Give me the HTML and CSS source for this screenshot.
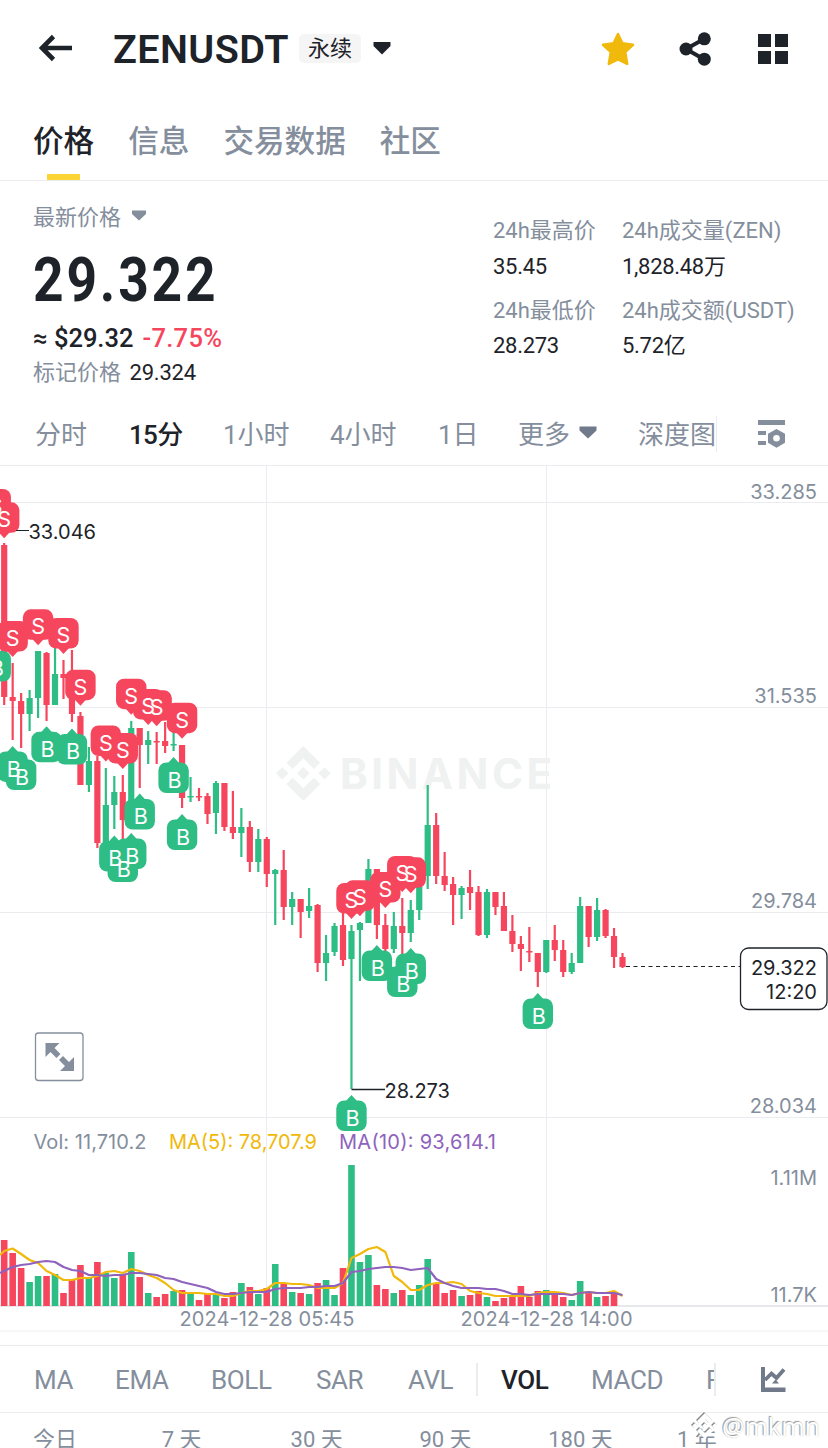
FILE: index.html
```html
<!DOCTYPE html>
<html lang="zh-CN">
<head>
  <meta charset="UTF-8">
  <meta name="viewport" content="width=device-width, initial-scale=1.0">
  <title>ZENUSDT 永续</title>
  <link rel="stylesheet" href="styles.css">
</head>
<body>
  <header class="header">
    <svg class="back" width="34" height="28" viewBox="0 0 34 28">
      <path d="M33 14H4M14.500 2.500L3 14l11.500 11.500" fill="none" stroke="#1e2329" stroke-width="4.600"/>
    </svg>
    <h1 class="symbol">ZENUSDT</h1>
    <span class="badge">永续</span>
    <svg class="caret" width="18" height="14" viewBox="0 0 18 14"><path d="M0.500 1h17v4L9 13.500.500 5z" fill="#1e2329"/></svg>
    <div class="actions">
      <svg width="34" height="34" viewBox="0 0 34 34">
        <path d="M17 2l4.400 9.300 10.600 1.500-7.800 7.200 2 12L17 27.500 7.800 32l2-12L2 12.800l10.600-1.500z" fill="#f0b90b" stroke="#f0b90b" stroke-width="2.500" stroke-linejoin="round"/>
      </svg>
      <svg width="32" height="34" viewBox="0 0 32 34">
        <path d="M25 7L7 17l18 10.200" fill="none" stroke="#1e2329" stroke-width="4"/>
        <circle cx="25.300" cy="6.800" r="6.500" fill="#1e2329"/>
        <circle cx="7" cy="17" r="6.500" fill="#1e2329"/>
        <circle cx="25.300" cy="27.200" r="6.500" fill="#1e2329"/>
      </svg>
      <svg width="30" height="30" viewBox="0 0 30 30" fill="#1e2329">
        <path d="M0 0h13v13H0zM17 0h13v13H17zM0 17h13v13H0zM17 17h13v13H17z"/>
      </svg>
    </div>
  </header>

  <nav class="tabs">
    <span class="tab active">价格</span>
    <span class="tab">信息</span>
    <span class="tab">交易数据</span>
    <span class="tab">社区</span>
  </nav>

  <section class="summary">
    <div class="price">
      <div class="price-label">最新价格
        <svg width="14" height="11" viewBox="0 0 14 11"><path d="M0 .500h14v3.500l-7 6.500-7-6.500z" fill="#848e9c"/></svg>
      </div>
      <div class="last">29.322</div>
      <div class="change"><span>≈ $29.32</span><span class="down">-7.75%</span></div>
      <div class="mark">标记价格 <b>29.324</b></div>
    </div>
    <dl class="stats">
      <div><dt>24h最高价</dt><dd>35.45</dd></div>
      <div><dt>24h成交量(ZEN)</dt><dd>1,828.48万</dd></div>
      <div><dt>24h最低价</dt><dd>28.273</dd></div>
      <div><dt>24h成交额(USDT)</dt><dd>5.72亿</dd></div>
    </dl>
  </section>

  <nav class="intervals">
    <span>分时</span>
    <span class="active">15分</span>
    <span>1小时</span>
    <span>4小时</span>
    <span>1日</span>
    <span>更多 <svg width="18" height="13" viewBox="0 0 18 13"><path d="M.500.500h17v4L9 12.500.500 4.500z" fill="#707a8a"/></svg></span>
    <span class="depth">深度图</span>
    <svg width="30" height="30" viewBox="0 0 30 30">
      <path d="M1 1h27v5H1zM1 12h8v4H1zM1 22h8v4H1z" fill="#848e9c"/>
      <path d="M19.500 10l8.500 4.800v9l-8.500 4.900-8.500-4.900v-9z" fill="#848e9c"/>
      <circle cx="19.500" cy="19.300" r="3.300" fill="#fff"/>
    </svg>
  </nav>

  <svg class="chart" id="chart" width="828" height="867" viewBox="0 465 828 867"></svg>

  <nav class="indicators">
    <span>MA</span>
    <span>EMA</span>
    <span>BOLL</span>
    <span>SAR</span>
    <span>AVL</span>
    <span class="active">VOL</span>
    <span>MACD</span>
    <span class="cut">RSI</span>
    <svg width="25" height="25" viewBox="0 0 25 25">
      <path d="M0 0h4v20.500h20.500V25H0z" fill="#707a8a"/>
      <path d="M4 13l6.500-6.500 5 4.500L23 2.500" fill="none" stroke="#707a8a" stroke-width="3.800"/>
      <path d="M14.500 12.500l3.500 4h-7z" fill="#707a8a"/>
    </svg>
  </nav>

  <div class="periods">
    <span>今日</span>
    <span>7 天</span>
    <span>30 天</span>
    <span>90 天</span>
    <span>180 天</span>
    <span>1 年</span>
  </div>

  <div class="credit">
    <svg width="26" height="26" viewBox="0 0 126.610 126.610"><use href="#logo"/></svg>
    <span>@mkmn</span>
  </div>

  <script src="script.js"></script>
</body>
</html>
```

FILE: styles.css
```css
* {
  box-sizing: border-box;
}
body {
  margin: 0;
  width: 828px;
  height: 1448px;
  overflow: hidden;
  position: relative;
  background: #fff;
  color: #1e2329;
  font-family: Roboto, "Noto Sans CJK SC", sans-serif;
}
svg {
  display: block;
  flex: none;
}

.header {
  display: flex;
  align-items: center;
  height: 97px;
  padding: 0 40px 0 39px;
}
.back {
  margin-bottom: 2px;
}
.symbol {
  margin: 2px 0 0 40px;
  width: 176px;
  font-size: 39.5px;
  font-weight: 600;
  line-height: 50px;
  letter-spacing: 0.4px;
  white-space: nowrap;
}
.badge {
  margin-left: 10px;
  width: 62px;
  height: 29px;
  border-radius: 5px;
  background: #f5f5f5;
  font-size: 22px;
  line-height: 29px;
  text-align: center;
}
.caret {
  margin-left: 12px;
  margin-bottom: 2px;
}
.actions {
  display: flex;
  align-items: center;
  margin-left: auto;
}
.actions svg + svg {
  margin-left: 44px;
}
.actions svg:last-child {
  margin-left: 47px;
}

.tabs {
  display: flex;
  gap: 34px;
  height: 84px;
  padding: 0 33px;
  border-bottom: 1px solid #eaecef;
  color: #848e9c;
  font-size: 30.6px;
  font-weight: 500;
}
.tab {
  height: 84px;
  line-height: 89px;
}
.tab.active {
  color: #1e2329;
  background: linear-gradient(#fcd535, #fcd535) center bottom 1px / 33px 6px no-repeat;
}

.summary {
  display: flex;
  height: 222px;
  padding-left: 33px;
}
.price {
  width: 460px;
}
.price-label {
  display: flex;
  align-items: center;
  gap: 11px;
  height: 34px;
  margin-top: 17px;
  color: #848e9c;
  font-size: 22px;
}
/* narrow, widely spaced numerals */
.last {
  margin-top: 11px;
  height: 74px;
  line-height: 74px;
  font-size: 62px;
  font-weight: 700;
  letter-spacing: 3.3px;
  transform: scaleX(0.86);
  transform-origin: left;
}
.change {
  display: flex;
  gap: 9px;
  height: 38px;
  margin-top: 2px;
  line-height: 38px;
  font-size: 25.5px;
  font-weight: 500;
}
.down {
  color: #f6465d;
  letter-spacing: 0.3px;
}
.mark {
  line-height: 31px;
  color: #848e9c;
  font-size: 22px;
}
.mark b {
  margin-left: 3px;
  font-weight: 400;
  letter-spacing: -0.2px;
  color: #1e2329;
}
.stats {
  display: grid;
  grid-template-columns: 129px 200px;
  grid-auto-rows: 79.5px;
  margin: 32px 0 0;
  font-size: 22px;
  line-height: 35.5px;
  white-space: nowrap;
}
.stats dt {
  color: #848e9c;
}
.stats dd {
  margin: 0;
  letter-spacing: -0.3px;
}

.intervals {
  display: grid;
  grid-template-columns: 94px 94px 107px 108px 80px 120px 118px 30px;
  align-items: center;
  height: 62px;
  padding-left: 36px;
  color: #848e9c;
  font-size: 26px;
}
.intervals span {
  display: flex;
  align-items: center;
  gap: 9px;
  height: 36px;
  padding-bottom: 3px;
  margin-left: -1px;
  white-space: nowrap;
}
.intervals .active {
  color: #1e2329;
  font-weight: 500;
  letter-spacing: -0.7px;
}
.intervals .depth {
  width: 79px;
  border-right: 1px solid #eaecef;
}

.chart {
  font-family: Inter, "Liberation Sans", sans-serif;
}

.indicators {
  display: grid;
  grid-template-columns: 81px 96px 105px 92px 68px 115px 115px 55px 25px;
  align-items: center;
  height: 68px;
  margin-top: 13px;
  padding-left: 34px;
  border-top: 1px solid #eaecef;
  border-bottom: 1px solid #eaecef;
  color: #848e9c;
  font-size: 26px;
  letter-spacing: -0.4px;
}
.indicators span {
  height: 33px;
  line-height: 35px;
}
.indicators .active {
  padding-left: 23px;
  border-left: 2px solid #eaecef;
  color: #1e2329;
  font-weight: 500;
}
.indicators .cut {
  width: 10px;
  overflow: hidden;
  border-right: 2px solid #eaecef;
}

.periods {
  display: grid;
  grid-template-columns: repeat(6, 128.8px);
  height: 35px;
  padding-left: 33px;
  overflow: hidden;
  color: #848e9c;
  font-size: 22px;
  line-height: 53px;
}

/* sits over the period row */
.credit {
  position: absolute;
  right: 8px;
  bottom: 6px;
  display: flex;
  align-items: center;
  gap: 4px;
  color: #fff;
  font: 25px/32px "Noto Sans", sans-serif;
  text-shadow: -1px -1px 1px #999, 0 0 1px #aaa;
}
.credit svg {
  fill: #fff;
  filter: drop-shadow(-0.5px -1px 0.6px #888);
}
```

FILE: script.js
```js
const RED = '#f6465d';
const GREEN = '#2ebd85';
const GRAY = '#848e9c';
const DARK = '#1e2329';
const STEP = 8.47;
const BASE = 1306;

// [up, high, open/close top, open/close bottom, low, volume top]
const candles = [
  [0,543,545,697,705,1240],[0,663,697,701,740,1253],[0,693,701,714,748,1268],[1,690,698,714,731,1282],
  [1,651,651,698,718,1276],[0,652,653,705,721,1276],[1,645,674,705,705,1274],[0,660,674,678,699,1293],
  [0,650,680,714,722,1280],[0,712,716,785,785,1265],[1,747,761,785,792,1278],[0,756,761,843,848,1262],
  [1,768,805,860,860,1273],[1,776,792,805,829,1278],[0,775,792,820,840,1275],[1,721,728,820,820,1252],
  [0,728,728,745,788,1277],[1,731,740,745,764,1293],[0,732,741,742.5,764,1297],[0,722,741,746,753,1294],
  [1,703,744,745.5,751,1291],[0,745,745,798,808,1290],[1,777,796,797.5,802,1292],[0,788,796,797.5,801,1300],
  [0,793,796,814,824,1294],[1,781,783,813,834,1295],[0,783,783,827,831,1298],[0,791,827,833,839,1292],
  [1,808,827,833,857,1283],[0,821,827,862,872,1287],[1,829,839,862,872,1294],[0,837,839,874,887,1288],
  [1,869,870,874,925,1264],[0,850,870,907,920,1284],[1,892,899,907,925,1292],[0,899,899,912,938,1293],
  [1,888,906,911,918,1294],[0,904,905,963,972,1283],[1,935,953,963,981,1280],[1,923,926,952,956,1295],
  [0,907,925,960,966,1268],[1,925,931,959,1089,1165],[1,922,923,930,981,1262],[1,859,869,923,923,1255],
  [0,869,869,925,939,1285],[0,914,925,949,952,1289],[1,912,926,949,953,1293],[0,898,926,933,955,1290],
  [1,900,910,933,942,1295],[1,876,876,910,920,1285],[1,785,825,876,889,1259],[0,813,825,876,884,1283],
  [0,852,876,885,891,1293],[0,877,884,895,925,1290],[1,886,888,895,919,1296],[0,870,887,893,910,1295],
  [0,886,892,935,936,1291],[1,889,892,935,938,1297],[0,892,892,907,915,1301],[0,892,906,931,931,1298],
  [0,915,931,944,952,1297],[0,936,944,949,971,1286],[0,927,951,952.5,962,1297],[0,953,953,972,987,1291],
  [1,940,940,972,973,1290],[0,925,940,950,961,1293],[0,940,950,972,977,1297],[1,953,963,972,974,1300],
  [1,897,906,963,963,1281],[0,906,906,937,947,1293],[1,898,910,937,941,1297],[0,909,910,936,938,1296],
  [0,928,936,957,968,1292],[0,953,957,967,968,1306]
];

const ma5 = [1251,1248.5,1254,1260,1263,1271,1275,1280,1280,1278,1278,1276,1272,1271,1273,1269,1271,1275,1278,1283,
  1290,1293,1293,1293,1294,1294,1296,1296,1293,1291,1291,1289,1283,1283,1284,1284,1285,1288,1288,1288,
  1283,1258,1254,1249,1247,1252,1276,1282,1290,1290,1285,1283,1283,1282,1284,1291,1293,1294,1296,1296,
  1296,1296,1296,1293,1292,1292,1293,1295,1293,1292,1293,1293,1291,1296];
const ma10 = [1271,1267,1265,1264,1262,1261,1262,1267,1270,1271,1275,1275,1276,1275,1275,1273,1273,1274,1275,1278,
  1279,1282,1284,1286,1288,1292,1294,1294,1293,1292,1292,1292,1289,1288,1288,1288,1287,1287,1286,1286,
  1283,1272,1271,1269,1268,1267,1267,1268,1270,1269,1268,1279,1283,1286,1288,1288,1288,1289,1289,1291,
  1294,1294,1295,1294,1294,1294,1294,1295,1293,1292,1293,1293,1293,1295];

// [candle index, top of the marker body]
const buys = [[-1,651],[1,751.5],[2,759.5],[5,731.7],[8,734],[20,762.5],[16,799],[21,819.5],[13,841],[15,838.5],
  [14,851.5],[44,950.5],[48,953.5],[47,966.5],[63,998.5],[41,1100.5]];
const sells = [[-1,489],[0,502.3],[1,621],[4,609.3],[7,618],[9,669.7],[15,678.7],[17,689],[18,690.3],[21,702.7],
  [12,725.5],[14,733],[41,883],[42,880.3],[45,872],[47,856],[48,857.3]];

const cx = i => 4.2 + i * STEP;
const line = (x1, y1, x2, y2, c, extra = '') =>
  `<path d="M${x1} ${y1}L${x2} ${y2}" stroke="${c}" ${extra}/>`;
const text = (x, y, s, c, extra = '', size = 20) =>
  `<text x="${x}" y="${y}" fill="${c}" font-size="${size}" ${extra}>${s}</text>`;
const END = 'text-anchor="end"';

let out = '';

// grid
[465.5, 502.5, 707.5, 912.5, 1117.5].forEach(y => out += line(0, y, 828, y, '#eaecef'));
[266.5, 546.5].forEach(x => out += line(x, 465, x, BASE, '#eaecef'));
out += line(0, 1306, 828, 1306, '#e6e8ec', 'stroke-width="2"');
out += line(0, 1331, 828, 1331, '#f7f7f7', 'stroke-width="2"');

// watermark
out += `<g fill="#f0f1f1"><g transform="translate(276 746) scale(.432)"><path id="logo" d="M38.73 53.2l24.59-24.58 24.6 24.6 14.3-14.31L63.32 0l-38.9 38.9zM0 63.31L14.3 49l14.31 14.31-14.31 14.3zM38.73 73.41L63.32 98l24.6-24.6 14.31 14.29-38.91 38.91-38.9-38.9zM98 63.31L112.3 49l14.31 14.3-14.31 14.32zM77.83 63.3L63.32 48.78 48.81 63.28l14.51 14.5z"/></g>
  <text x="340" y="788.500" font-size="42" font-weight="700" textLength="212">BINANCE</text></g>`;

candles.forEach(([up, hi, top, bottom, lo, vol], i) => {
  const c = up ? GREEN : RED;
  const x = cx(i);
  out += line(x, hi, x, lo, c, 'stroke-width="2.200"');
  out += `<rect x="${x - 3.1}" y="${top}" width="6.200" height="${bottom - top}" fill="${c}"/>`;
  out += `<rect x="${x - 3.3}" y="${vol}" width="6.600" height="${BASE - vol}" fill="${c}"/>`;
});

const average = (ys, first, c) => {
  const points = ys.map((y, i) => `${cx(i).toFixed(1)},${y}`).join(' ');
  out += `<polyline points="0,${first} ${points}" fill="none" stroke="${c}" stroke-width="2.200" stroke-linejoin="round"/>`;
};
average(ma5, 1255, '#f0b90b');
average(ma10, 1273, '#8e62bd');

// buy / sell markers, letters stay above every body
let letters = '';
const marker = (i, y, isBuy) => {
  const x = cx(i);
  const c = isBuy ? GREEN : RED;
  const tip = isBuy ? `M${x - 6} ${y + 1}l6 -6.500 6 6.500z` : `M${x - 6} ${y + 29.5}l6 6.500 6-6.500z`;
  out += `<rect x="${x - 15.2}" y="${y}" width="30.400" height="30.500" rx="8" fill="${c}"/><path d="${tip}" fill="${c}"/>`;
  letters += text(x + (isBuy ? 1 : 0), y + 25, isBuy ? 'B' : 'S', '#fff', 'text-anchor="middle"', 21.5);
};
buys.forEach(([i, y]) => marker(i, y, true));
sells.forEach(([i, y]) => marker(i, y, false));
out += letters;

// high / low callouts
out += line(16, 530.5, 29, 530.5, DARK) + text(28.5, 538.5, '33.046', DARK);
out += line(351.5, 1089.5, 385, 1089.5, DARK, 'stroke-width="1.300"') + text(384.5, 1098, '28.273', DARK);

// price axis
[['33.285', 499], ['31.535', 703], ['29.784', 908], ['28.034', 1113], ['1.11M', 1185], ['11.7K', 1302]]
  .forEach(([s, y]) => out += text(817, y, s, GRAY, END));

// current price
out += line(626, 966.5, 740, 966.5, DARK, 'stroke-width="1.200" stroke-dasharray="4 3.500"');
out += `<rect x="740.500" y="948" width="86.500" height="61.500" rx="8" fill="#fff" stroke="${DARK}" stroke-width="1.300"/>`;
out += text(817, 975, '29.322', DARK, END) + text(817, 999, '12:20', DARK, END);

// full screen button
out += `<rect x="35.500" y="1033" width="47.500" height="47.500" rx="3" fill="#fff" stroke="${GRAY}" stroke-width="1.300"/>
  <path d="M45.500 1043h14l-5 5 6 6-4 4-6-6-5 5zM74 1071h-14l5-5-6-6 4-4 6 6 5-5z" fill="${GRAY}"/>`;

// legend and dates
out += text(33.5, 1149, 'Vol: 11,710.2', GRAY, 'textLength="113"');
out += text(169, 1149, 'MA(5): 78,707.9', '#f0b90b', 'textLength="148"');
out += text(339, 1149, 'MA(10): 93,614.1', '#8e62bd', 'textLength="157"');
out += text(179.5, 1326, '2024-12-28 05:45', GRAY, 'textLength="175"');
out += text(460.5, 1326, '2024-12-28 14:00', GRAY, 'textLength="172"');

document.getElementById('chart').innerHTML = out;
```
